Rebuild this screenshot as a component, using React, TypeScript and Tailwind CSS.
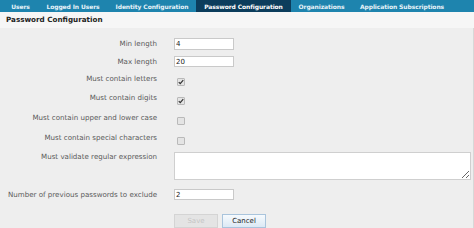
import React from "react";

const tabs = [
  { label: "Users", w: "w-[35px]" },
  { label: "Logged In Users", w: "w-[70px]" },
  { label: "Identity Configuration", w: "w-[88px]" },
  { label: "Password Configuration", w: "w-[95px]", active: true },
  { label: "Organizations", w: "w-[61px]" },
  { label: "Application Subscriptions", w: "w-[100px]" },
];

function Check({ checked }: { checked?: boolean }) {
  return (
    <span className="w-[8px] h-[8px] rounded-[1px] border border-[#b9b9b9] bg-[#e4e4e4] flex items-center justify-center">
      {checked && (
        <svg viewBox="0 0 8 8" className="w-[6px] h-[6px]">
          <path d="M1 4.2 L3 6.2 L7 1.5" fill="none" stroke="#333" strokeWidth="1.6" />
        </svg>
      )}
    </span>
  );
}

function Label({ children }: { children: React.ReactNode }) {
  return <div className="w-[157px] shrink-0 text-right text-[#5a5a5a] leading-[10px]">{children}</div>;
}

export default function App() {
  return (
    <div
      className="w-[474px] h-[228px] overflow-hidden flex flex-col bg-[#eeeeee] text-[7.1px]"
      style={{ fontFamily: '"DejaVu Sans", Verdana, sans-serif' }}
    >
      {/* tab bar */}
      <nav className="h-[12px] bg-[#1e84ae] flex pl-[3px] shrink-0">
        {tabs.map((t) => (
          <div
            key={t.label}
            className={`${t.w} h-full flex items-center justify-center text-[6px] font-bold tracking-[-0.1px] ${
              t.active ? "bg-[#0c3d5c] text-white" : "text-[#e6f3f9]"
            }`}
          >
            {t.label}
          </div>
        ))}
      </nav>

      {/* section title */}
      <header className="h-[16px] bg-[#f6f6f6] px-[6px] flex items-center font-bold text-[7.2px] text-[#222] shrink-0">
        Password Configuration
      </header>

      <div className="flex-1 flex flex-col border-r border-[#d8d8d8]">
        <div className="flex items-center gap-[17px] h-[12px] mt-[10px]">
          <Label>Min length</Label>
          <input
            defaultValue="4"
            className="w-[60px] h-[12px] bg-white border border-[#c9c9c9] px-[1px] text-[7px] text-[#222] outline-none"
          />
        </div>
        <div className="flex items-center gap-[17px] h-[11px] mt-[6px]">
          <Label>Max length</Label>
          <input
            defaultValue="20"
            className="w-[60px] h-[11px] bg-white border border-[#c9c9c9] px-[1px] text-[7px] text-[#222] outline-none"
          />
        </div>

        <div className="flex items-start gap-[17px] h-[19px] mt-[7px]">
          <Label>Must contain letters</Label>
          <div className="pl-[3px] pt-[4px]"><Check checked /></div>
        </div>
        <div className="flex items-start gap-[17px] h-[20px]">
          <Label>Must contain digits</Label>
          <div className="pl-[3px] pt-[4px]"><Check checked /></div>
        </div>
        <div className="flex items-start gap-[17px] h-[20px]">
          <Label>Must contain upper and lower case</Label>
          <div className="pl-[3px] pt-[4px]"><Check /></div>
        </div>
        <div className="flex items-start gap-[17px] h-[19px]">
          <Label>Must contain special characters</Label>
          <div className="pl-[3px] pt-[4px]"><Check /></div>
        </div>

        <div className="flex items-start gap-[17px] h-[28px]">
          <Label>Must validate regular expression</Label>
          <textarea className="w-[297px] h-[28px] bg-white border border-[#cfcfcf] outline-none resize" />
        </div>

        <div className="flex items-center gap-[17px] h-[11px] mt-[9px]">
          <Label>Number of previous passwords to exclude</Label>
          <input
            defaultValue="2"
            className="w-[60px] h-[11px] bg-white border border-[#c9c9c9] px-[1px] text-[7px] text-[#222] outline-none"
          />
        </div>

        <div className="flex gap-[4px] mt-[14px] pl-[174px]">
          <button
            disabled
            className="w-[44px] h-[14px] border border-[#d4d4d4] bg-[#e4e4e4] text-[#c4c4c4] text-[7px] flex items-center justify-center"
          >
            Save
          </button>
          <button className="w-[44px] h-[14px] border border-[#a9c4dc] bg-gradient-to-b from-[#f6fafd] to-[#dce9f5] text-[#222] text-[7px] flex items-center justify-center">
            Cancel
          </button>
        </div>
      </div>
    </div>
  );
}
